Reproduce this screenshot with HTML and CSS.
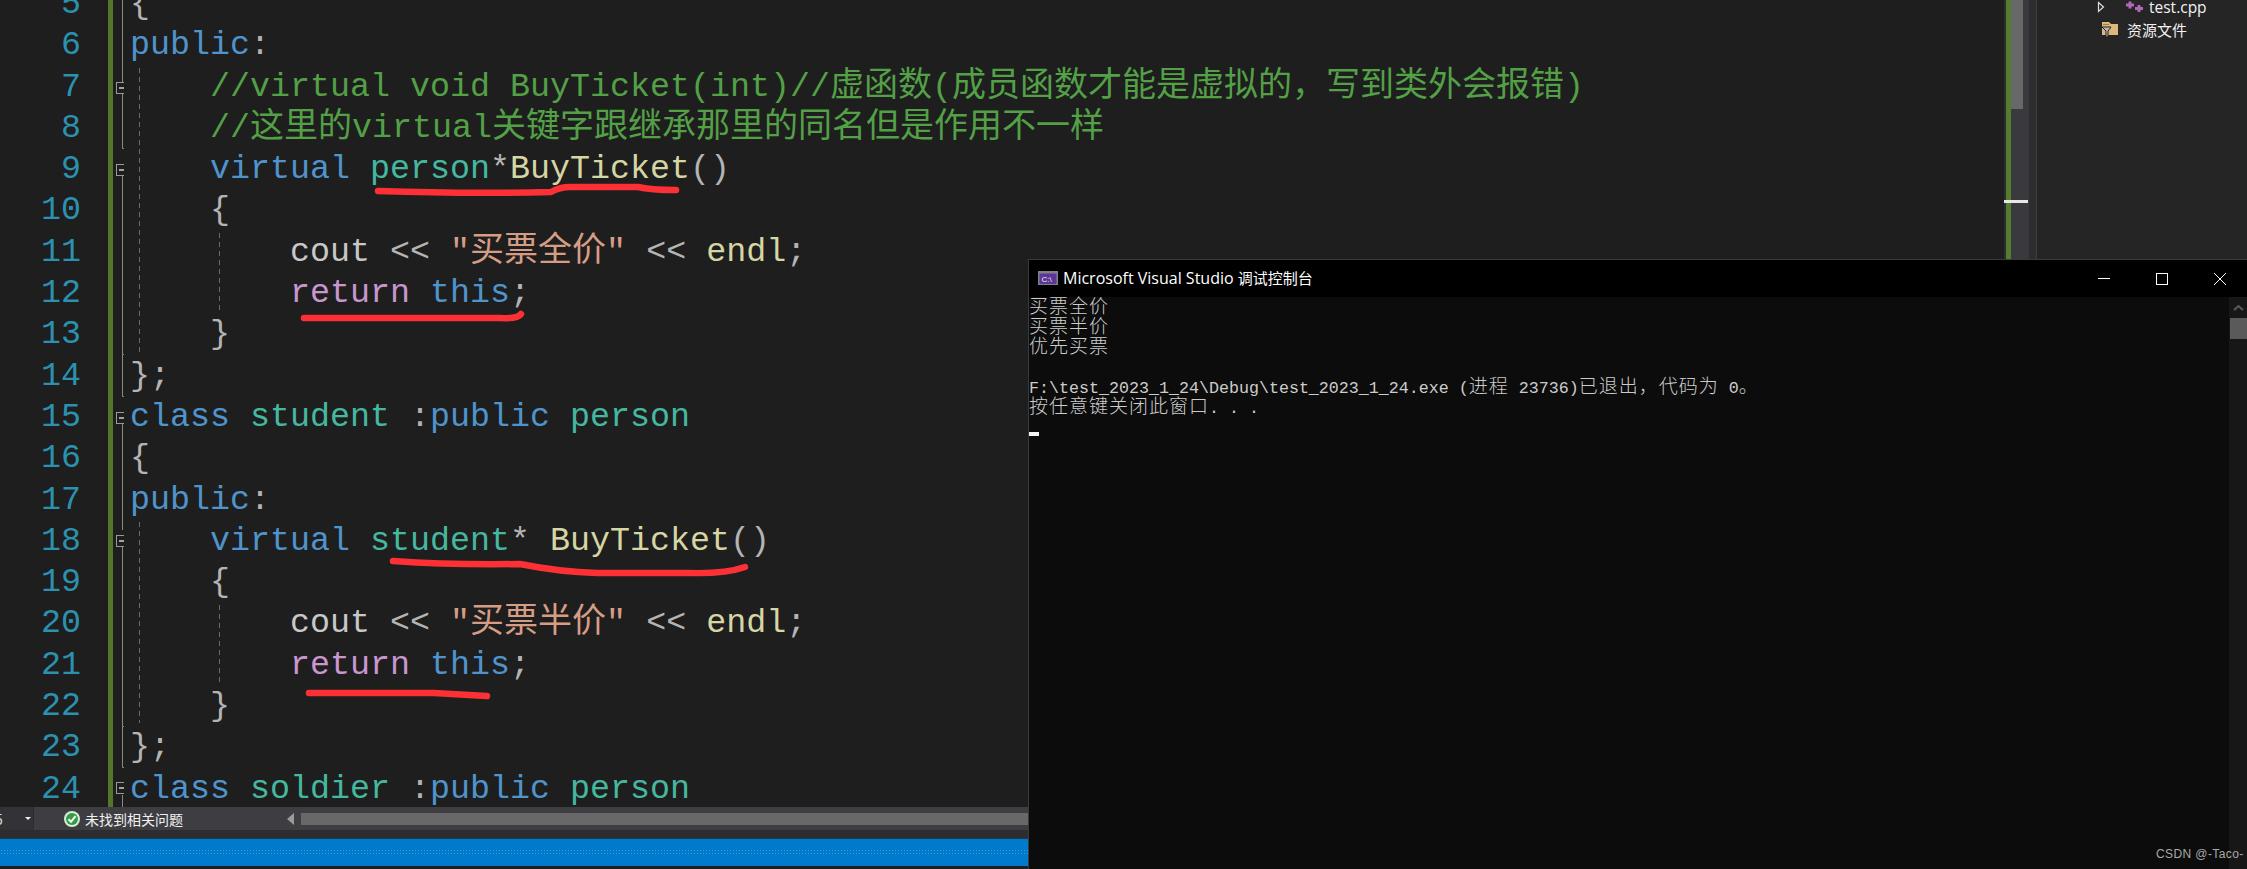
FILE: index.html
```html
<!DOCTYPE html>
<html lang="zh-CN">
<head>
<meta charset="utf-8">
<title>Visual Studio</title>
<link rel="stylesheet" href="styles.css">
</head>
<body>
<div class="ide">
  <div class="main">
    <div class="editor">
      <div class="nums">
        <div>5</div><div>6</div><div>7</div><div>8</div><div>9</div><div>10</div><div>11</div><div>12</div><div>13</div><div>14</div><div>15</div><div>16</div><div>17</div><div>18</div><div>19</div><div>20</div><div>21</div><div>22</div><div>23</div><div>24</div>
      </div>
      <div class="bar"></div>
      <svg class="fold" width="16" height="807" viewBox="108 0 16 807" aria-hidden="true">
        <g class="fold-line">
          <path d="M122.5 0V83M122.5 93V148.5H126M122.5 164V175M122.5 175V354.5H126M122.5 354.5V396.5H126M122.5 423V530M122.5 547V726.5H126M122.5 726.5V767.5H126M122.5 795V807"/>
        </g>
        <g class="fold-box">
          <rect x="116.5" y="82.5" width="11" height="11"/><path d="M119 88H125"/>
          <rect x="116.5" y="164.5" width="11" height="11"/><path d="M119 170H125"/>
          <rect x="116.5" y="412.5" width="11" height="11"/><path d="M119 418H125"/>
          <rect x="116.5" y="535.5" width="11" height="11"/><path d="M119 541H125"/>
          <rect x="116.5" y="782.5" width="11" height="11"/><path d="M119 788H125"/>
        </g>
      </svg>
      <pre class="code"><div><span class="p">{</span></div><div><span class="k">public</span><span class="p">:</span></div><div><span class="c">    //virtual void BuyTicket(int)//<span class="zh">虚函数</span>(<span class="zh">成员函数才能是虚拟的，写到类外会报错</span>)</span></div><div><span class="c">    //<span class="zh">这里的</span>virtual<span class="zh">关键字跟继承那里的同名但是作用不一样</span></span></div><div>    <span class="k">virtual</span> <span class="t">person</span><span class="p">*</span><span class="f">BuyTicket</span><span class="p">()</span></div><div>    <span class="p">{</span></div><div>        <span class="v">cout</span> <span class="p">&lt;&lt;</span> <span class="s">"<span class="zh">买票全价</span>"</span> <span class="p">&lt;&lt;</span> <span class="f">endl</span><span class="p">;</span></div><div>        <span class="r">return</span> <span class="k">this</span><span class="p">;</span></div><div>    <span class="p">}</span></div><div><span class="p">};</span></div><div><span class="k">class</span> <span class="t">student</span> <span class="p">:</span><span class="k">public</span> <span class="t">person</span></div><div><span class="p">{</span></div><div><span class="k">public</span><span class="p">:</span></div><div>    <span class="k">virtual</span> <span class="t">student</span><span class="p">*</span> <span class="f">BuyTicket</span><span class="p">()</span></div><div>    <span class="p">{</span></div><div>        <span class="v">cout</span> <span class="p">&lt;&lt;</span> <span class="s">"<span class="zh">买票半价</span>"</span> <span class="p">&lt;&lt;</span> <span class="f">endl</span><span class="p">;</span></div><div>        <span class="r">return</span> <span class="k">this</span><span class="p">;</span></div><div>    <span class="p">}</span></div><div><span class="p">};</span></div><div><span class="k">class</span> <span class="t">soldier</span> <span class="p">:</span><span class="k">public</span> <span class="t">person</span></div></pre>
    </div>
    <div class="overview">
      <div class="ov-green"></div>
      <div class="ov-thumb"></div>
      <div class="ov-mark"></div>
    </div>
    <div class="ov-gap"></div>
    <div class="explorer">
      <div class="tree-row tree-file">
        <svg class="tw" width="8" height="12" viewBox="0 0 8 12" aria-hidden="true"><path d="M1.5 1.5L6.5 6L1.5 10.5Z"/></svg>
        <svg class="cpp" width="17" height="12" viewBox="0 0 17 12" aria-hidden="true"><path d="M0 4H8M4 0.500V7.500M9 7.500H17M13 4V11"/></svg>
        <span>test.cpp</span>
      </div>
      <div class="tree-row tree-folder">
        <svg width="18" height="17" viewBox="0 0 18 17" aria-hidden="true"><path class="folder" d="M1 1H8L10 3H17V14H1Z"/><path class="funnel" d="M1 6H10L7 10V16H5V10Z"/><path class="folder-dark" d="M2 3H8V4H2Z"/></svg>
        <span>资源文件</span>
      </div>
    </div>
  </div>
  <div class="status">
    <div class="combo"><span class="combo-text">5</span><i class="combo-arrow"></i></div>
    <svg class="ok" width="16" height="16" viewBox="0 0 16 16" aria-hidden="true"><circle class="ok-c" cx="8" cy="8" r="8"/><circle class="ok-i" cx="8" cy="8" r="6"/><path class="ok-t" d="M4.5 8.2L7 10.8L11.5 5.2"/></svg>
    <span class="status-text">未找到相关问题</span>
    <i class="h-arrow"></i>
    <div class="h-thumb"></div>
  </div>
  <div class="under"></div>
  <div class="blue"><div class="dots"></div></div>
</div>

<svg class="ink" width="2247" height="869" viewBox="0 0 2247 869" aria-hidden="true">
  <path d="M378 191Q470 194 551 192Q560 187 570 187H638Q650 190 676 190"/>
  <path d="M304 318H500Q518 319 521 314"/>
  <path d="M393 561Q450 565 520 564Q560 572 597 573L689 573Q725 574 745 567"/>
  <path d="M309 693H434L487 696"/>
  <g class="guide">
    <path d="M139.5 68V354M139.5 522V723M219.5 233V313M219.5 605V685"/>
  </g>
</svg>

<div class="console">
  <div class="title">
    <svg class="title-icon" width="20" height="14" viewBox="0 0 20 14" aria-hidden="true"><rect width="20" height="14" class="ti-bg"/><rect x="1.500" y="2.500" width="17" height="10.500" class="ti-in"/><text x="3.500" y="10.500" class="ti-tx">C:\</text></svg>
    <span class="title-text">Microsoft Visual Studio <span class="title-zh">调试控制台</span></span>
    <div class="controls">
      <svg width="12" height="12" viewBox="0 0 12 12" aria-hidden="true"><path d="M0 5.5H12"/></svg>
      <svg width="12" height="12" viewBox="0 0 12 12" aria-hidden="true"><rect x=".5" y=".5" width="11" height="11"/></svg>
      <svg width="12" height="12" viewBox="0 0 12 12" aria-hidden="true"><path d="M0 0L12 12M12 0L0 12"/></svg>
    </div>
  </div>
  <div class="con-body">
    <div class="con-text">
<div class="row"><span class="cn">买票全价</span></div>
<div class="row"><span class="cn">买票半价</span></div>
<div class="row"><span class="cn">优先买票</span></div>
<div class="row"></div>
<div class="row">F:\test_2023_1_24\Debug\test_2023_1_24.exe (<span class="cn">进程</span> 23736)<span class="cn">已退出，代码为</span> 0<span class="cn">。</span></div>
<div class="row"><span class="cn">按任意键关闭此窗口</span>. . .</div>
<div class="row cursor-row"><i class="cursor"></i></div>
    </div>
    <div class="con-scroll">
      <svg width="18" height="21" viewBox="0 0 18 21" aria-hidden="true"><path d="M5 13L9.500 9L14 13"/></svg>
      <div class="con-thumb"></div>
    </div>
    <span class="mark">CSDN @-Taco-</span>
  </div>
</div>
</body>
</html>
```
FILE: styles.css
```css
* { box-sizing: border-box; }
html, body { margin: 0; padding: 0; width: 2247px; height: 869px; overflow: hidden; background: #1e1e1e; }
body { position: relative; font-family: "Liberation Mono", "Noto Sans CJK SC", monospace; }

.ide { display: flex; flex-direction: column; width: 2247px; height: 869px; }
.main { display: flex; height: 807px; flex: none; }
.editor { display: flex; width: 2004px; height: 807px; overflow: hidden; background: #1e1e1e; flex: none; }

.nums, .code {
  margin: -16px 0 0;
  font-family: "Liberation Mono", "Noto Sans CJK SC", monospace;
  font-size: 33.33px;
  line-height: 41.3px;
}
.nums { width: 81px; text-align: right; color: #2b91af; flex: none; }
.nums div, .code div { height: 41.3px; }
.bar { width: 5px; margin-left: 27px; height: 807px; background: #54762c; flex: none; }
.fold { display: block; flex: none; margin-left: -5px; }
.fold-line path { fill: none; stroke: #8a8a8a; stroke-width: 1; }
.fold-box rect { fill: #1e1e1e; stroke: #9a9a9a; stroke-width: 1; }
.fold-box path { fill: none; stroke: #d0d0d0; stroke-width: 1.5; }
.code { color: #dcdcdc; flex: 1; white-space: pre; padding-left: 6px; }
.zh { font-family: "Noto Sans CJK SC", sans-serif; font-size: 34px; line-height: 0; }
.k { color: #4f94cc; }
.t { color: #45b8a0; }
.f { color: #d6d6a4; }
.c { color: #53a047; }
.s { color: #d69d85; }
.r { color: #c996d0; }
.p { color: #b4b4b4; }
.v { color: #c8c8c8; }

.overview { position: relative; width: 25px; height: 807px; background: #3a3a3e; flex: none; border-left: 2px solid #2d2d30; }
.ov-green { position: absolute; left: 0; top: 0; bottom: 0; width: 5px; background: #567d2e; }
.ov-thumb { position: absolute; left: 5px; top: 0; width: 12px; height: 109px; background: #686868; }
.ov-mark { position: absolute; left: -2px; top: 200px; width: 24px; height: 3px; background: #e8e8e8; }
.ov-gap { width: 8px; height: 807px; background: #2d2d30; border-right: 1px solid #3f3f42; flex: none; }

.explorer { flex: 1; height: 807px; background: #252526; color: #f1f1f1; font-family: "Open Sans", "Noto Sans CJK SC", sans-serif; font-size: 15.5px; }
.tree-row { display: flex; align-items: center; height: 23px; }
.tree-file { margin-top: -5px; padding-left: 60px; }
.tree-file .tw { flex: none; }
.tw path { fill: #252526; stroke: #e0e0e0; stroke-width: 1.200; }
.cpp { margin-left: 21px; flex: none; }
.cpp path { fill: none; stroke: #b067b8; stroke-width: 3; }
.tree-file span { margin-left: 6px; }
.tree-folder { padding-left: 64px; font-size: 15px; }
.tree-folder svg { flex: none; }
.tree-folder span { margin-left: 8px; }
.folder { fill: #dcb67a; }
.folder-dark { fill: #a07d45; }
.funnel { fill: #b8b8b8; stroke: #252526; stroke-width: 1; }

.status { display: flex; align-items: center; height: 23px; background: #3e3e42; flex: none; color: #f1f1f1; font-family: "Noto Sans CJK SC", sans-serif; font-size: 14px; }
.combo { display: flex; align-items: center; width: 34px; height: 23px; background: #333337; border-right: 1px solid #2d2d30; overflow: hidden; flex: none; }
.combo-text { margin-left: -5px; width: 30px; color: #d8d8d8; flex: none; }
.combo-arrow { width: 0; height: 0; border-left: 3px solid transparent; border-right: 3px solid transparent; border-top: 3px solid #f1f1f1; flex: none; }
.ok { margin-left: 30px; flex: none; }
.ok-c { fill: #d8ecd8; }
.ok-i { fill: #2f9e44; }
.ok-t { fill: none; stroke: #fff; stroke-width: 2; }
.status-text { margin-left: 5px; line-height: 20px; width: 98px; flex: none; white-space: nowrap; }
.h-arrow { width: 0; height: 0; margin-left: 104px; border-top: 6px solid transparent; border-bottom: 6px solid transparent; border-right: 7px solid #9a9a9a; flex: none; }
.h-thumb { margin-left: 7px; width: 740px; height: 12px; background: #686868; flex: none; }

.under { height: 8px; background: #2d2d30; flex: none; }
.blue { height: 28px; border-top: 1px solid #1c3a52; background: #007acc; flex: none; padding-top: 10px; }
.dots { height: 6px; width: 1028px; background-image: radial-gradient(circle, #3f9ad8 0.7px, transparent 1px); background-size: 3px 3px; }
.ide::after { content: ""; display: block; height: 3px; background: #1e1e1e; }

.ink { position: absolute; left: 0; top: 0; pointer-events: none; }
.ink > path { fill: none; stroke: #fc3035; stroke-width: 6.500; stroke-linecap: round; stroke-linejoin: round; }
.guide path { fill: none; stroke: #6a6a6a; stroke-width: 1; stroke-dasharray: 5 4; }

.console { position: absolute; left: 1028px; top: 259px; width: 1219px; height: 610px; background: #0c0c0c; border-top: 1px solid #3a3a3a; border-left: 1px solid #3a3a3a; display: flex; flex-direction: column; }
.title { display: flex; align-items: center; height: 37px; flex: none; background: #000; color: #fff; font-family: "Open Sans", "Noto Sans CJK SC", sans-serif; font-size: 16px; padding-left: 9px; padding-bottom: 2px; }
.title-icon { flex: none; }
.ti-bg { fill: #80808c; }
.ti-in { fill: #5c3696; }
.ti-tx { fill: #f0f0f0; font-family: "Liberation Sans", sans-serif; font-size: 8px; }
.title-text { margin-left: 5px; white-space: nowrap; }
.title-zh { font-size: 15px; }
.controls { margin-left: auto; display: flex; gap: 46px; padding-right: 21px; padding-top: 2px; }
.controls svg { display: block; flex: none; }
.controls path, .controls rect { fill: none; stroke: #fff; stroke-width: 1; }

.con-body { position: relative; flex: 1; display: flex; min-height: 0; }
.con-text { flex: 1; padding-top: 2px; color: #cccccc; font-family: "Liberation Mono", "Noto Sans CJK SC", monospace; font-size: 16.67px; line-height: 20px; }
.row { height: 20px; white-space: pre; }
.cn { font-family: "Noto Sans CJK SC", sans-serif; font-size: 19px; letter-spacing: 1px; line-height: 0; font-weight: 300; }
.cursor-row { display: flex; align-items: flex-end; }
.cursor { display: block; width: 10px; height: 4px; margin-bottom: 3px; background: #f2f2f2; }
.con-scroll { width: 18px; flex: none; background: #171717; }
.con-scroll svg { display: block; }
.con-scroll path { fill: none; stroke: #5c5c5c; stroke-width: 2; }
.con-thumb { height: 21px; margin-left: 1px; background: #5a5a5a; }
.mark { position: absolute; left: 1127px; top: 549px; color: #a8a8a8; font-family: "Liberation Sans", sans-serif; font-size: 12px; line-height: 16px; white-space: nowrap; letter-spacing: 0.4px; }
```
